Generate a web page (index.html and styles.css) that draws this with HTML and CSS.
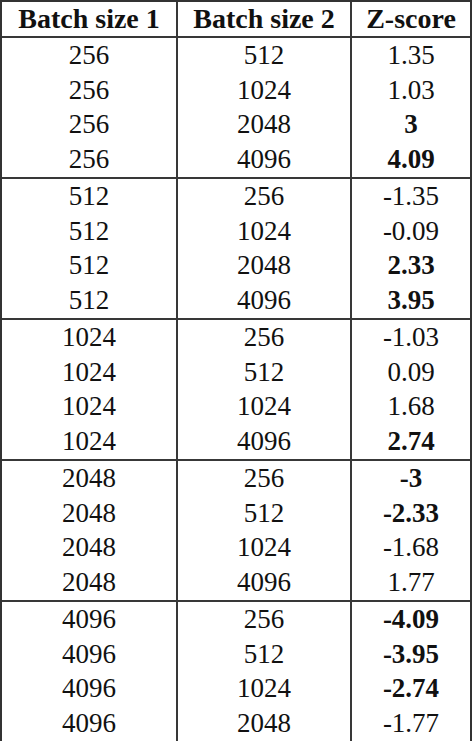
FILE: index.html
```html
<!DOCTYPE html>
<html>
<head>
<meta charset="utf-8">
<link rel="stylesheet" href="styles.css">
</head>
<body>
<div class="table">
  <div class="group head">
    <div class="cell">Batch size 1</div><div class="cell">Batch size 2</div><div class="cell">Z-score</div>
  </div>
  <div class="group">
    <div class="cell">256</div><div class="cell">512</div><div class="cell">1.35</div>
    <div class="cell">256</div><div class="cell">1024</div><div class="cell">1.03</div>
    <div class="cell">256</div><div class="cell">2048</div><div class="cell b">3</div>
    <div class="cell">256</div><div class="cell">4096</div><div class="cell b">4.09</div>
  </div>
  <div class="group">
    <div class="cell">512</div><div class="cell">256</div><div class="cell">-1.35</div>
    <div class="cell">512</div><div class="cell">1024</div><div class="cell">-0.09</div>
    <div class="cell">512</div><div class="cell">2048</div><div class="cell b">2.33</div>
    <div class="cell">512</div><div class="cell">4096</div><div class="cell b">3.95</div>
  </div>
  <div class="group">
    <div class="cell">1024</div><div class="cell">256</div><div class="cell">-1.03</div>
    <div class="cell">1024</div><div class="cell">512</div><div class="cell">0.09</div>
    <div class="cell">1024</div><div class="cell">1024</div><div class="cell">1.68</div>
    <div class="cell">1024</div><div class="cell">4096</div><div class="cell b">2.74</div>
  </div>
  <div class="group">
    <div class="cell">2048</div><div class="cell">256</div><div class="cell b">-3</div>
    <div class="cell">2048</div><div class="cell">512</div><div class="cell b">-2.33</div>
    <div class="cell">2048</div><div class="cell">1024</div><div class="cell">-1.68</div>
    <div class="cell">2048</div><div class="cell">4096</div><div class="cell">1.77</div>
  </div>
  <div class="group">
    <div class="cell">4096</div><div class="cell">256</div><div class="cell b">-4.09</div>
    <div class="cell">4096</div><div class="cell">512</div><div class="cell b">-3.95</div>
    <div class="cell">4096</div><div class="cell">1024</div><div class="cell b">-2.74</div>
    <div class="cell">4096</div><div class="cell">2048</div><div class="cell">-1.77</div>
  </div>
</div>
</body>
</html>
```
FILE: styles.css
```css
html, body {
  margin: 0;
  padding: 0;
  background: #ffffff;
}
body {
  font-family: "Liberation Serif", "DejaVu Serif", serif;
  font-size: 27px;
  color: #111111;
  overflow: hidden;
}
.table {
  width: 472px;
  box-sizing: border-box;
  border-left: 2px solid #333333;
  border-right: 2px solid #333333;
  border-top: 2px solid #333333;
}
.group {
  display: grid;
  grid-template-columns: 176px 174px 118px;
  grid-auto-rows: 34.75px;
  border-bottom: 2px solid #383838;
}
.group.head {
  grid-auto-rows: 34px;
  font-weight: bold;
  font-size: 28px;
}
.group:last-child {
  border-bottom: none;
}
.cell {
  display: flex;
  align-items: center;
  justify-content: center;
  box-sizing: border-box;
  line-height: 1;
  white-space: nowrap;
}
.cell:nth-child(3n+1),
.cell:nth-child(3n+2) {
  border-right: 2px solid #383838;
}
.b {
  font-weight: bold;
}
```
